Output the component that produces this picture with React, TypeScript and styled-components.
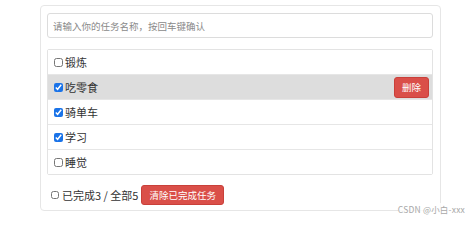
import { useState } from "react";
import styled, { createGlobalStyle } from "styled-components";

const GlobalStyle = createGlobalStyle`
  body {
    margin: 0;
    background: #fff;
    font-family: "Noto Sans CJK SC", "Noto Sans", sans-serif;
    color: #333;
  }
`;

const Page = styled.div`
  position: relative;
  width: 474px;
  height: 222px;
  overflow: hidden;
`;

const Wrap = styled.div`
  box-sizing: border-box;
  width: 401px;
  margin: 5px 0 0 40px;
  padding: 7px 7px 0 6px;
  border: 1px solid #e6e6e6;
  border-radius: 4px;
  height: 206px;
`;

const Input = styled.input`
  display: block;
  box-sizing: border-box;
  width: 100%;
  height: 25px;
  padding: 0 5px;
  border: 1px solid #dcdcdc;
  border-radius: 3px;
  font-family: inherit;
  font-size: 9.5px;
  outline: none;
  &::placeholder {
    color: #8a8a8a;
  }
`;

const List = styled.ul`
  list-style: none;
  margin: 11px 0 0;
  padding: 0;
  border: 1px solid #e3e3e3;
  border-radius: 2px;
`;

const Item = styled.li<{ $active?: boolean }>`
  display: flex;
  align-items: center;
  height: 24px;
  padding: 0 3px 0 6px;
  border-bottom: 1px solid #e6e6e6;
  background: ${(p) => (p.$active ? "#dddddd" : "#fff")};
  font-size: 11px;
  &:last-child {
    border-bottom: none;
  }
`;

const Check = styled.input.attrs({ type: "checkbox" })<{ $size?: number }>`
  width: ${(p) => p.$size ?? 9}px;
  height: ${(p) => p.$size ?? 9}px;
  margin: 0 2px 0 0;
  accent-color: #1a73e8;
`;

const Label = styled.label`
  display: flex;
  align-items: center;
  flex: 1;
`;

const DangerBtn = styled.button<{ $small?: boolean }>`
  height: ${(p) => (p.$small ? "21px" : "20px")};
  padding: 0 7px;
  border: 1px solid #c9403a;
  border-radius: 3px;
  background: #da4f49;
  color: #fff;
  font-family: inherit;
  font-size: 9.5px;
  cursor: pointer;
`;

const Footer = styled.div`
  display: flex;
  align-items: center;
  height: 26px;
  margin-top: 7px;
  padding-left: 4px;
  font-size: 11px;
`;

const Summary = styled.span`
  margin: 0 3px 0 1px;
`;

const Watermark = styled.div`
  position: absolute;
  right: 9px;
  bottom: 7px;
  font-size: 8.5px;
  color: #a8a8a8;
  background: rgba(255, 255, 255, 0.8);
  letter-spacing: 0.2px;
`;

interface Todo {
  id: number;
  name: string;
  done: boolean;
}

const initial: Todo[] = [
  { id: 1, name: "锻炼", done: false },
  { id: 2, name: "吃零食", done: true },
  { id: 3, name: "骑单车", done: true },
  { id: 4, name: "学习", done: true },
  { id: 5, name: "睡觉", done: false },
];

export default function App() {
  const [todos, setTodos] = useState<Todo[]>(initial);
  const [hover, setHover] = useState<number>(2);
  const doneCount = todos.filter((t) => t.done).length;

  const toggle = (id: number) =>
    setTodos((prev) => prev.map((t) => (t.id === id ? { ...t, done: !t.done } : t)));

  return (
    <Page>
      <GlobalStyle />
      <Wrap>
        <Input placeholder="请输入你的任务名称，按回车键确认" />
        <List>
          {todos.map((t) => (
            <Item key={t.id} $active={hover === t.id} onMouseEnter={() => setHover(t.id)}>
              <Label>
                <Check checked={t.done} onChange={() => toggle(t.id)} />
                <span>{t.name}</span>
              </Label>
              {hover === t.id && <DangerBtn $small>删除</DangerBtn>}
            </Item>
          ))}
        </List>
        <Footer>
          <Check $size={8} checked={false} readOnly />
          <Summary>
            已完成{doneCount} / 全部{todos.length}
          </Summary>
          <DangerBtn>清除已完成任务</DangerBtn>
        </Footer>
      </Wrap>
      <Watermark>CSDN @小白-xxx</Watermark>
    </Page>
  );
}
